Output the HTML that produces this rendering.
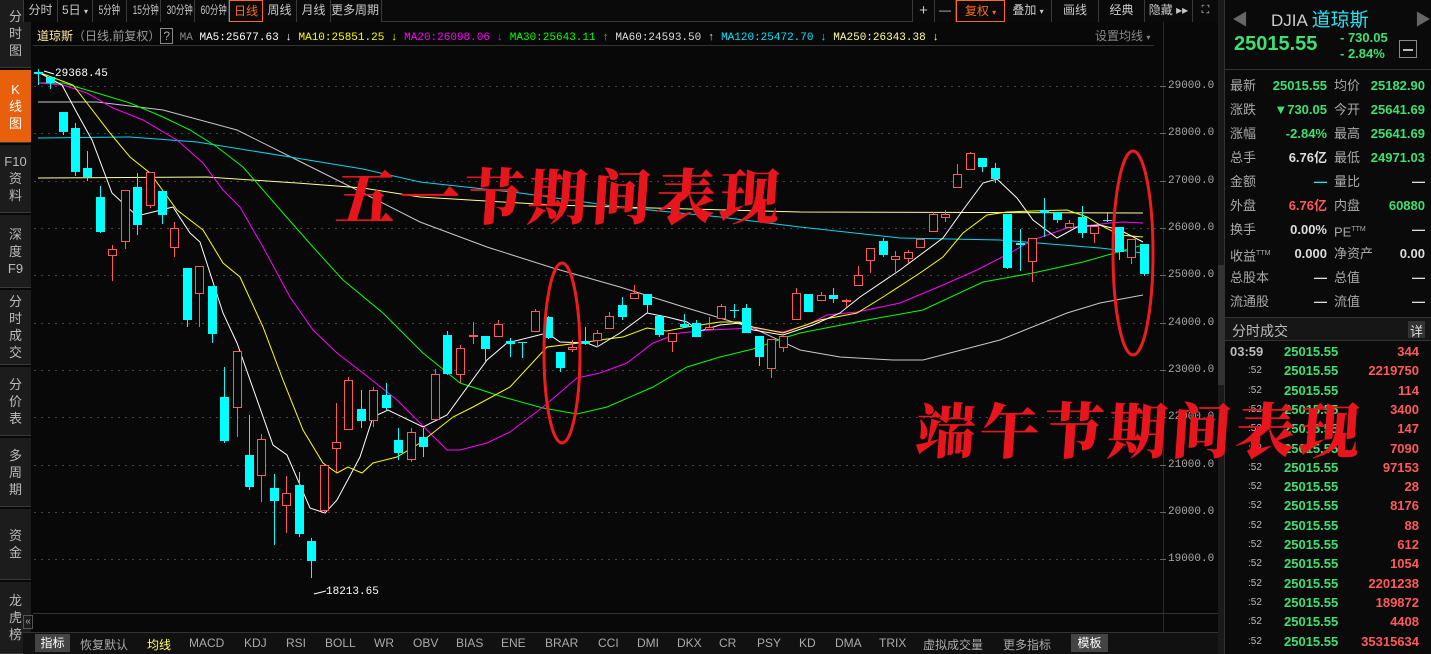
<!DOCTYPE html>
<html><head><meta charset="utf-8">
<style>
*{margin:0;padding:0;box-sizing:border-box}
body{width:1431px;height:654px;background:#080808;overflow:hidden;position:relative;font-family:"Liberation Sans","Noto Sans CJK SC",sans-serif;color:#c8c8c8;font-size:12px}
.a{position:absolute;white-space:nowrap}
.side{position:absolute;left:0;width:31px;background:#1c1c1c;border-bottom:1px solid #3a3a3a;color:#bbb;font-size:13px;line-height:17px;text-align:center;display:flex;align-items:center;justify-content:center}
.tab{position:absolute;top:0;height:22px;line-height:21px;text-align:center;color:#c8c8c8;font-size:12px;border-right:1px solid #3a3a3a;background:#0a0a0a;white-space:nowrap;overflow:hidden}
.tab i{font-style:normal;display:inline-block;transform:scaleX(0.7);transform-origin:center}
.mono{font-family:"Liberation Mono","Noto Sans CJK SC",monospace}
.bt{position:absolute;top:636px;font-size:12px;color:#aaa}
.rl{position:absolute;font-size:13px;line-height:16px;color:#aaa}
.rv{position:absolute;font-size:13px;line-height:16px;font-weight:bold;text-align:right}
.g{color:#3ee070}.r{color:#ff5a5a}.w{color:#ddd}
.ax{position:absolute;left:1168px;font-size:11px;color:#aaa;font-family:"Liberation Mono",monospace}
.ann{position:absolute;white-space:nowrap;font-size:60px;line-height:64px;color:#e8161c;font-family:'Noto Serif CJK SC',serif;font-weight:900;letter-spacing:4px;transform:skewX(-4deg);z-index:5}
</style></head><body>
<div class="side" style="top:0;height:68px">分<br>时<br>图</div>
<div class="side" style="top:70px;height:73px;background:#e8600c;color:#fff">K<br>线<br>图</div>
<div class="side" style="top:145px;height:68px">F10<br>资<br>料</div>
<div class="side" style="top:215px;height:73px">深<br>度<br>F9</div>
<div class="side" style="top:290px;height:75px">分<br>时<br>成<br>交</div>
<div class="side" style="top:367px;height:69px">分<br>价<br>表</div>
<div class="side" style="top:438px;height:69px">多<br>周<br>期</div>
<div class="side" style="top:509px;height:71px">资<br>金</div>
<div class="side" style="top:582px;height:72px">龙<br>虎<br>榜</div>
<div style="position:absolute;left:23px;top:0;width:1196px;height:22px;background:#0a0a0a;border-bottom:1px solid #3a3a3a"></div>
<div class="tab" style="left:23px;width:35px;border-left:1px solid #3a3a3a">分时</div>
<div class="tab" style="left:58px;width:35px">5日 <span style="font-size:8px">▾</span></div>
<div class="tab" style="left:93px;width:34px"><i>5分钟</i></div>
<div class="tab" style="left:127px;width:34px"><i>15分钟</i></div>
<div class="tab" style="left:161px;width:34px"><i>30分钟</i></div>
<div class="tab" style="left:195px;width:34px"><i>60分钟</i></div>
<div class="tab" style="left:229px;width:34px;color:#ff6a1a;border:1px solid #ff6a1a">日线</div>
<div class="tab" style="left:263px;width:34px">周线</div>
<div class="tab" style="left:297px;width:34px">月线</div>
<div class="tab" style="left:331px;width:51px">更多周期 <span style="font-size:8px">▾</span></div>
<div class="tab" style="left:912px;width:23px;border-left:1px solid #3a3a3a;font-size:15px">+</div>
<div class="tab" style="left:935px;width:21px">—</div>
<div class="tab" style="left:956px;width:49px;color:#ff6a1a;border:1px solid #ff6a1a">复权 <span style="font-size:8px">▾</span></div>
<div class="tab" style="left:1005px;width:47px">叠加 <span style="font-size:8px">▾</span></div>
<div class="tab" style="left:1052px;width:47px">画线</div>
<div class="tab" style="left:1099px;width:46px">经典</div>
<div class="tab" style="left:1145px;width:48px">隐藏 ▸▸</div>
<div class="tab" style="left:1193px;width:26px;font-size:11px">⛶</div>
<div class="a" style="left:37px;top:27px;font-size:12px"><span style="color:#ffe9a0">道琼斯</span><span style="color:#999">（日线,前复权）</span><span style="border:1px solid #888;padding:0 2px;color:#aaa">?</span><span class="mono" style="font-size:11px"> <span style="color:#888">MA</span> <span style="color:#fff">MA5:25677.63 ↓</span> <span style="color:#ffff00">MA10:25851.25 ↓</span> <span style="color:#ff00ff">MA20:26098.06 ↓</span> <span style="color:#00ff00">MA30:25643.11 ↑</span> <span style="color:#ddd">MA60:24593.50 ↑</span> <span style="color:#00e5ff">MA120:25472.70 ↓</span> <span style="color:#ffff99">MA250:26343.38 ↓</span></span></div>
<div class="a" style="left:1095px;top:27px;color:#888;font-size:12px">设置均线 <span style="font-size:8px">▾</span></div>
<div style="position:absolute;left:33px;top:45px;width:1121px;height:1px;background:#333"></div>
<div style="position:absolute;left:1163px;top:22px;width:1px;height:610px;background:#2a2a2a"></div>
<div style="position:absolute;left:1218px;top:0;width:6px;height:654px;background:#1a1a1a"></div>
<div style="position:absolute;left:1218px;top:265px;width:6px;height:120px;background:#333"></div>
<div class="ax" style="top:80px">29000.0</div>
<div class="ax" style="top:127px">28000.0</div>
<div class="ax" style="top:175px">27000.0</div>
<div class="ax" style="top:222px">26000.0</div>
<div class="ax" style="top:269px">25000.0</div>
<div class="ax" style="top:317px">24000.0</div>
<div class="ax" style="top:364px">23000.0</div>
<div class="ax" style="top:411px">22000.0</div>
<div class="ax" style="top:459px">21000.0</div>
<div class="ax" style="top:506px">20000.0</div>
<div class="ax" style="top:553px">19000.0</div>
<svg id="ch" width="1431" height="654" style="position:absolute;left:0;top:0">
</svg>
<div class="a mono" style="left:55px;top:68px;font-size:11px;color:#fff">29368.45</div>
<div class="a mono" style="left:326px;top:586px;font-size:11px;color:#fff">18213.65</div>
<div style="position:absolute;left:33px;top:613px;width:1185px;height:1px;background:#333"></div>
<div style="position:absolute;left:23px;top:615px;width:10px;height:14px;border:1px solid #555;color:#aaa;font-size:10px;line-height:12px;text-align:center">«</div>
<div style="position:absolute;left:23px;top:632px;width:1195px;height:22px;background:#111;border-top:1px solid #333"></div>
<div class="bt" style="left:35px;top:634px;width:35px;height:18px;background:#444;color:#fff;text-align:center;line-height:18px">指标</div>
<div class="bt" style="left:80px">恢复默认</div>
<div class="bt" style="left:147px;color:#ffff66">均线</div>
<div class="bt" style="left:189px">MACD</div>
<div class="bt" style="left:244px">KDJ</div>
<div class="bt" style="left:286px">RSI</div>
<div class="bt" style="left:325px">BOLL</div>
<div class="bt" style="left:374px">WR</div>
<div class="bt" style="left:413px">OBV</div>
<div class="bt" style="left:456px">BIAS</div>
<div class="bt" style="left:501px">ENE</div>
<div class="bt" style="left:545px">BRAR</div>
<div class="bt" style="left:598px">CCI</div>
<div class="bt" style="left:637px">DMI</div>
<div class="bt" style="left:677px">DKX</div>
<div class="bt" style="left:719px">CR</div>
<div class="bt" style="left:757px">PSY</div>
<div class="bt" style="left:799px">KD</div>
<div class="bt" style="left:835px">DMA</div>
<div class="bt" style="left:879px">TRIX</div>
<div class="bt" style="left:923px">虚拟成交量</div>
<div class="bt" style="left:1003px">更多指标</div>
<div class="bt" style="left:1071px;top:634px;width:37px;height:18px;background:#444;color:#fff;text-align:center;line-height:18px">模板</div>
<div style="position:absolute;left:1224px;top:0;width:207px;height:654px;background:#0a0a0a;border-left:1px solid #333"></div>
<div class="a" style="left:1232px;top:6px;color:#666;font-size:16px">◀</div>
<div class="a" style="left:1415px;top:6px;color:#666;font-size:16px">▶</div>
<div class="a" style="left:1271px;top:5px;font-size:17px;color:#ccc">DJIA <span style="color:#27e3f5;font-size:19px">道琼斯</span></div>
<div class="a" style="left:1234px;top:33px;font-size:20px;font-weight:bold;color:#3ee070">25015.55</div>
<div class="a g" style="left:1340px;top:30px;font-size:13px;font-weight:bold">- 730.05</div>
<div class="a g" style="left:1340px;top:46px;font-size:13px;font-weight:bold">- 2.84%</div>
<div style="position:absolute;left:1399px;top:40px;width:18px;height:18px;border:1px solid #888"><div style="margin:8px 3px 0;height:2px;background:#bbb"></div></div>
<div style="position:absolute;left:1225px;top:69px;width:206px;height:1px;background:#333"></div>
<div id="rows"></div>
<div style="position:absolute;left:1225px;top:317px;width:206px;height:24px;background:#161616;border-top:1px solid #333;border-bottom:1px solid #333"></div>
<div class="a" style="left:1232px;top:321px;font-size:14px;color:#bbb">分时成交</div>
<div class="a" style="left:1408px;top:321px;width:17px;height:17px;background:#333;font-size:13px;color:#ddd;text-align:center">详</div>
<div id="trades"></div>
<div class="ann" style="left:336px;top:162px">五一节期间表现</div>
<div class="ann" style="left:916px;top:396px">端午节期间表现</div>
<script>
const S='http://www.w3.org/2000/svg',svg=document.getElementById('ch');
function el(t,a){const e=document.createElementNS(S,t);for(const k in a)e.setAttribute(k,a[k]);svg.appendChild(e);return e}
[86,133,181,228,275,323,370,417,465,512,559].forEach(y=>{el('line',{x1:34,y1:y+.5,x2:1160,y2:y+.5,stroke:'#444','stroke-dasharray':'2 5'});el('line',{x1:1160,y1:y+.5,x2:1166,y2:y+.5,stroke:'#666'})});
function pl(pts,c){el('polyline',{points:pts,fill:'none',stroke:c,'stroke-width':1})}
pl('38,102 97,102 163,110 237,130 297,160 363,193 420,222 487,247 553,268 620,287 687,308 753,328 800,350 840,357 893,360 923,360 1000,340 1067,313 1100,303 1143,295','#c8c8c8');
pl('38,138 130,137 197,142 290,157 363,169 420,182 520,193 620,207 720,217 800,227 900,238 1000,240 1100,248 1143,253','#00d8f0');
pl('38,178 207,177 297,183 363,188 420,197 553,205 653,208 800,212 1143,213','#ffff99');
pl('38,83 63,83 97,93 130,103 163,117 190,130 217,147 243,167 283,213 313,247 343,280 383,313 423,353 460,383 503,397 543,408 577,414 607,407 653,387 687,367 720,357 753,349 787,337 800,333 867,320 923,310 983,282 1033,273 1083,262 1143,245','#00ff00');
pl('38,83 63,85 87,93 113,108 143,120 177,140 203,163 223,190 240,207 263,247 290,297 313,330 337,353 363,373 397,400 420,423 447,450 460,450 487,443 510,432 543,407 577,378 600,373 627,363 653,343 680,333 710,330 753,328 783,332 807,325 827,315 857,312 900,303 943,285 977,270 1010,253 1033,240 1067,228 1093,225 1110,223 1123,222 1143,223','#ff00ff');
pl('38,72 73,85 110,133 130,157 150,173 177,210 203,230 223,263 240,277 263,327 283,380 303,430 323,463 337,473 348,467 362,473 373,463 397,457 420,443 453,417 473,407 510,387 547,347 587,342 607,339 623,337 647,328 667,331 687,327 720,322 740,322 753,327 783,333 820,320 857,313 883,297 920,273 943,257 963,233 987,215 1007,212 1033,211 1067,210 1087,217 1100,225 1120,235 1143,237','#ffff00');
pl('38,72 62,85 77,113 92,140 112,193 137,216 173,207 190,233 200,242 223,313 237,343 273,445 287,455 310,508 325,513 337,500 360,457 373,417 388,410 423,427 447,415 487,360 507,343 547,333 560,342 587,343 597,347 620,333 647,313 667,317 687,322 700,331 720,325 740,323 753,330 783,335 813,325 840,313 860,297 900,270 943,238 963,210 983,183 997,179 1017,198 1033,220 1057,238 1077,227 1100,225 1120,230 1143,242','#ffffff');
const C=[[38,72,74,69,85,'c'],[50,77,83,77,89,'c'],[63,112,132,112,135,'c'],[75,128,172,123,176,'c'],[87,168,177,151,181,'c'],[100,197,232,186,233,'c'],[112,249,255,245,281,'r'],[125,190,241,190,249,'r'],[137,187,225,173,235,'c'],[150,172,205,172,208,'r'],[162,191,215,191,224,'c'],[174,228,247,222,257,'r'],[187,268,320,268,327,'c'],[199,266,293,266,327,'r'],[212,286,334,286,343,'c'],[224,397,441,367,443,'c'],[237,351,407,351,437,'r'],[249,455,487,415,490,'c'],[261,439,475,434,502,'r'],[274,488,501,474,545,'c'],[286,493,505,476,533,'r'],[299,485,534,472,537,'c'],[311,541,561,538,578,'c'],[324,465,510,465,513,'r'],[336,442,448,403,472,'r'],[348,380,429,377,430,'r'],[361,409,421,390,428,'c'],[373,390,420,387,427,'r'],[386,395,408,383,410,'c'],[398,440,453,428,460,'c'],[411,432,459,428,462,'r'],[423,437,447,428,457,'c'],[435,374,419,369,419,'r'],[447,335,374,331,375,'c'],[460,348,374,345,383,'r'],[473,335,336,322,344,'r'],[485,336,349,336,362,'c'],[498,324,336,320,336,'r'],[510,341,344,338,357,'c'],[522,342,343,342,358,'c'],[535,311,331,309,331,'r'],[548,317,338,316,339,'c'],[560,352,368,352,372,'c'],[572,347,349,340,352,'r'],[585,341,344,327,345,'c'],[597,333,340,330,347,'r'],[609,316,328,312,328,'r'],[622,305,317,297,320,'c'],[634,293,298,285,298,'r'],[647,294,305,294,313,'c'],[659,316,335,316,337,'c'],[672,333,341,333,352,'r'],[684,324,327,314,328,'c'],[696,323,337,320,337,'c'],[709,327,329,317,330,'r'],[721,306,318,304,318,'r'],[734,310,311,304,318,'c'],[746,308,333,304,333,'c'],[759,336,357,336,366,'c'],[771,339,368,339,378,'r'],[783,336,347,336,352,'r'],[796,293,319,288,319,'r'],[808,294,312,294,312,'c'],[821,295,300,292,300,'r'],[833,295,299,288,303,'c'],[846,300,301,299,307,'r'],[858,275,285,266,285,'r'],[870,248,260,248,273,'r'],[883,241,255,238,257,'c'],[895,256,259,251,273,'r'],[908,252,258,250,263,'r'],[920,239,247,239,247,'r'],[933,214,231,212,231,'r'],[945,214,217,210,222,'r'],[957,174,187,164,187,'r'],[970,153,169,152,169,'r'],[982,158,167,158,172,'c'],[995,168,179,163,183,'c'],[1007,214,268,214,269,'c'],[1020,243,245,229,271,'c'],[1032,238,261,238,282,'r'],[1044,210,213,198,237,'c'],[1057,212,220,212,223,'c'],[1069,223,227,220,227,'r'],[1082,217,233,206,238,'c'],[1094,226,233,226,243,'r'],[1107,220,221,212,222,'c'],[1119,227,252,227,260,'c'],[1131,239,257,239,264,'r'],[1144,244,274,244,276,'c']];
C.forEach(([x,t,b,wt,wb,c])=>{
 if(c=='c'){el('line',{x1:x+.5,y1:wt,x2:x+.5,y2:wb,stroke:'#00ffff'});el('rect',{x:x-4,y:t,width:9,height:Math.max(1,b-t),fill:'#00ffff'});}
 else{el('line',{x1:x+.5,y1:wt,x2:x+.5,y2:t,stroke:'#ff5a5a'});el('line',{x1:x+.5,y1:b,x2:x+.5,y2:wb,stroke:'#ff5a5a'});el('rect',{x:x-3.5,y:t+.5,width:8,height:Math.max(1,b-t),fill:'#080808',stroke:'#ff5a5a'});}
});
el('line',{x1:314,y1:594,x2:326,y2:591,stroke:'#fff'});el('line',{x1:44,y1:71,x2:54,y2:74,stroke:'#fff'});
el('ellipse',{cx:562,cy:353,rx:18,ry:90,fill:'none',stroke:'#ee1c1c','stroke-width':3});
el('ellipse',{cx:1133,cy:253,rx:20,ry:102,fill:'none',stroke:'#ee1c1c','stroke-width':3});
const R=[['最新','25015.55','g','均价','25182.90','g'],['涨跌','▼730.05','g','今开','25641.69','g'],['涨幅','-2.84%','g','最高','25641.69','g'],['总手','6.76亿','w','最低','24971.03','g'],['金额','—','c','量比','—','w'],['外盘','6.76亿','r','内盘','60880','g'],['换手','0.00%','w','PE<sup style="font-size:7px">TTM</sup>','—','w'],['收益<sup style="font-size:7px">TTM</sup>','0.000','w','净资产','0.00','w'],['总股本','—','w','总值','—','w'],['流通股','—','w','流值','—','w']];
let h='';R.forEach((r,i)=>{const y=78+i*24;
h+=`<div class="rl" style="left:1230px;top:${y}px">${r[0]}</div><div class="rv ${r[2]}" style="left:1260px;width:67px;top:${y}px;${r[2]=='c'?'color:#27e3f5':''}">${r[1]}</div><div class="rl" style="left:1334px;top:${y}px">${r[3]}</div><div class="rv ${r[5]}" style="left:1350px;width:75px;top:${y}px">${r[4]}</div>`});
document.getElementById('rows').innerHTML=h;
const V=['344','2219750','114','3400','147','7090','97153','28','8176','88','612','1054','2201238','189872','4408','35315634'];
h='';V.forEach((v,i)=>{const y=344+i*19.3;h+=`<div class="a" style="left:${i?1248:1230}px;top:${y}px;font-size:${i?10:13}px;color:#bbb;font-weight:${i?'normal':'bold'};${i?'margin-top:2px':''}">${i?':52':'03:59'}</div><div class="a g" style="left:1284px;top:${y}px;font-size:13px;font-weight:bold">25015.55</div><div class="a r" style="left:1340px;width:79px;text-align:right;top:${y}px;font-size:13px;font-weight:bold">${v}</div>`});
document.getElementById('trades').innerHTML=h;
</script>
</body></html>
